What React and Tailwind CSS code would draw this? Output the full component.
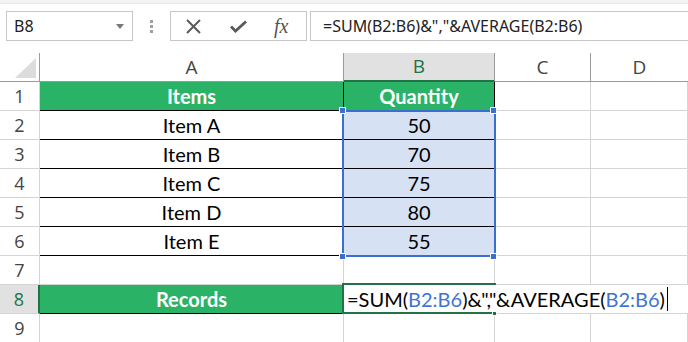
import React from 'react';

const cellFont = { fontFamily: 'Lato, "Open Sans", sans-serif' };

const items = [
  { row: 2, name: 'Item A', qty: 50 },
  { row: 3, name: 'Item B', qty: 70 },
  { row: 4, name: 'Item C', qty: 75 },
  { row: 5, name: 'Item D', qty: 80 },
  { row: 6, name: 'Item E', qty: 55 },
];

const Ref = ({ children }) => <span className="text-[#3f74d0]">{children}</span>;

const FormulaBar = () => (
  <div className="h-[53px] bg-white font-['Noto_Sans',sans-serif]">
    <div className="h-[4px] bg-[#f3f3f3] border-b border-[#ebebeb]" />
    <div className="flex items-center h-[30px] mt-[7px]">
      <div className="ml-[6px] w-[127px] h-[30px] border border-[#c6c6c6] flex items-center justify-between pl-[7px] pr-[8px]">
        <span className="text-[16px] text-[#222]">B8</span>
        <svg width="8" height="5" viewBox="0 0 8 5"><path d="M0 0h8L4 5z" fill="#777" /></svg>
      </div>
      <div className="w-[37px] flex flex-col items-center gap-[2px]">
        <div className="w-[3px] h-[3px] bg-[#a0a0a0]" />
        <div className="w-[3px] h-[3px] bg-[#a0a0a0]" />
        <div className="w-[3px] h-[3px] bg-[#a0a0a0]" />
      </div>
      <div className="w-[137px] h-[30px] border border-[#c6c6c6] flex items-center">
        <svg className="ml-[15px]" width="15" height="15" viewBox="0 0 15 15">
          <path d="M1 1L14 14M14 1L1 14" stroke="#5a5a5a" strokeWidth="2" />
        </svg>
        <svg className="ml-[29px]" width="17" height="13" viewBox="0 0 17 13">
          <path d="M1 6.5L5.5 11L16 1.5" stroke="#5a5a5a" strokeWidth="2.8" fill="none" />
        </svg>
        <span className="ml-[27px] text-[20px] italic text-[#555] font-['Liberation_Serif',serif] leading-none">fx</span>
      </div>
      <div className="ml-[3px] flex-1 h-[30px] border-t border-b border-l border-[#c6c6c6] flex items-center pl-[12px]">
        <span className="text-[16px] text-[#222]">=SUM(B2:B6)&amp;","&amp;AVERAGE(B2:B6)</span>
      </div>
    </div>
  </div>
);

const Handle = ({ className }) => (
  <div className={`absolute w-[7px] h-[7px] bg-[#3a6fcf] border border-white ${className}`} />
);

export default function App() {
  const headFont = "font-['Open_Sans',sans-serif]";
  const rowHead = `h-[29px] border-r border-b border-[#d4d4d4] flex items-center justify-center text-[18px] text-[#444] ${headFont}`;
  const colHead = `h-[29px] flex items-center justify-center text-[19px] ${headFont}`;
  const grid = 'h-[29px] border-r border-b border-[#d4d4d4]';
  const cell = 'h-[29px] flex items-center justify-center text-[20px]';
  return (
    <div className="w-[688px] h-[342px] overflow-hidden bg-white">
      <FormulaBar />
      <div className="relative" style={cellFont}>
        <div className="grid grid-cols-[40px_304px_151px_96px_97px]">
          {/* column headers */}
          <div className="h-[29px] border-r border-b border-[#9b9b9b] flex items-end justify-end pr-[3px] pb-[3px]">
            <div className="w-0 h-0 border-l-[21px] border-l-transparent border-b-[20px] border-b-[#dcdcdc]" />
          </div>
          <div className={`${colHead} border-r border-b border-[#9b9b9b] text-[#444]`}>A</div>
          <div className={`${colHead} border-r border-[#9b9b9b] border-b-2 border-b-[#217346] bg-[#e1e1e1] text-[#217346]`}>B</div>
          <div className={`${colHead} border-r border-b border-[#9b9b9b] text-[#444]`}>C</div>
          <div className={`${colHead} border-b border-[#9b9b9b] text-[#444]`}>D</div>

          {/* row 1 */}
          <div className={rowHead}>1</div>
          <div className={`${cell} bg-[#2ab366] border-r border-b border-black font-bold text-white`}>Items</div>
          <div className={`${cell} bg-[#2ab366] border-r border-b border-black font-bold text-white`}>Quantity</div>
          <div className={grid} />
          <div className={grid} />

          {items.map((it) => (
            <React.Fragment key={it.row}>
              <div className={rowHead}>{it.row}</div>
              <div className={`${cell} border-r border-b border-black text-black`}>{it.name}</div>
              <div className={`${cell} bg-[#d6e2f4] border-r border-b border-black text-black`}>{it.qty}</div>
              <div className={grid} />
              <div className={grid} />
            </React.Fragment>
          ))}

          {/* row 7 */}
          <div className={rowHead}>7</div>
          <div className={grid} />
          <div className={grid} />
          <div className={grid} />
          <div className={grid} />

          {/* row 8 */}
          <div className={`h-[29px] border-r-2 border-r-[#217346] border-b border-[#d4d4d4] bg-[#e1e1e1] flex items-center justify-center text-[18px] text-[#217346] ${headFont}`}>8</div>
          <div className={`${cell} bg-[#2ab366] border-r border-b border-black font-bold text-white`}>Records</div>
          <div className="col-span-3 h-[29px] border-b border-[#d4d4d4] flex items-center pl-[3px] text-[20px] text-black">
            <span>=SUM(<Ref>B2:B6</Ref>)&amp;","&amp;AVERAGE(<Ref>B2:B6</Ref>)</span>
            <span className="w-[1px] h-[24px] bg-black ml-[2px]" />
          </div>

          {/* row 9 */}
          <div className={rowHead}>9</div>
          <div className={grid} />
          <div className={grid} />
          <div className={grid} />
          <div className={grid} />
        </div>

        {/* range highlight B2:B6 */}
        <div className="absolute left-[342px] top-[57px] w-[154px] h-[147px] border-2 border-[#3a6fcf] pointer-events-none" />
        <Handle className="left-[339px] top-[54px]" />
        <Handle className="left-[490px] top-[54px]" />
        <Handle className="left-[339px] top-[200px]" />
        <Handle className="left-[490px] top-[200px]" />

        {/* active cell B8, right edge hidden under the overflowing edit text */}
        <div className="absolute left-[342px] top-[230px] w-[154px] h-[31px] border-t-2 border-l-2 border-b-2 border-[#217346] pointer-events-none" />
        <div className="absolute left-[492px] top-[258px] w-[5px] h-[5px] bg-[#217346] border border-white" />
      </div>
    </div>
  );
}
